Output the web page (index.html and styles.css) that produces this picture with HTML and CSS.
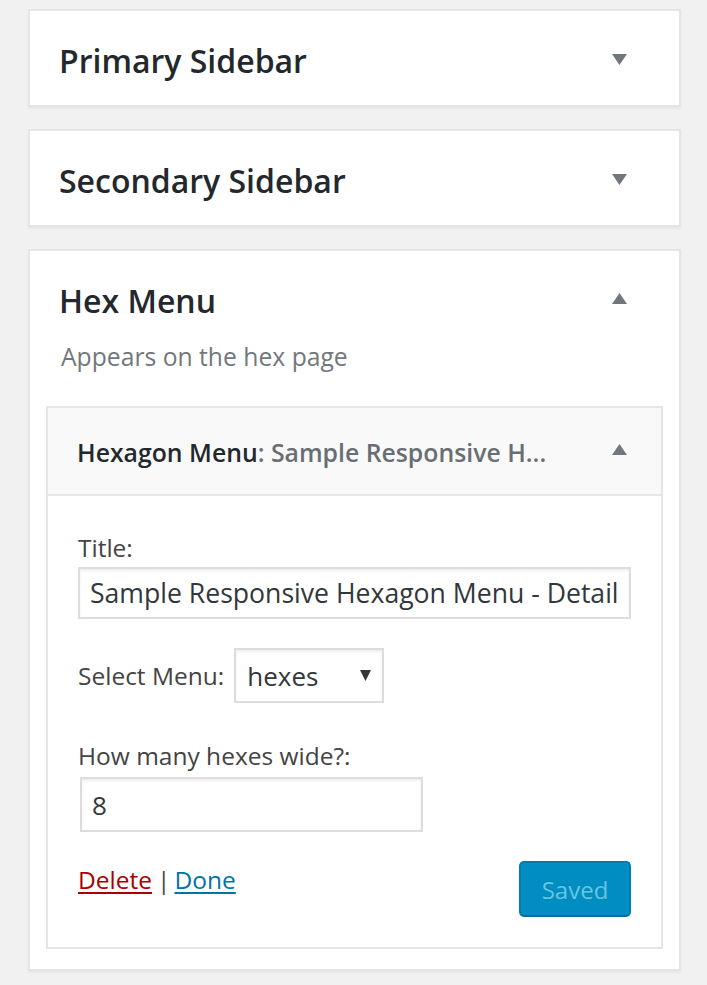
FILE: index.html
```html
<!DOCTYPE html>
<html lang="en">
<head>
<meta charset="utf-8">
<title>Widgets</title>
<link rel="stylesheet" href="styles.css">
</head>
<body>
<div class="wrap">
  <section class="card">
    <div class="card-head">
      <h2 class="card-title">Primary Sidebar</h2>
      <svg class="toggle toggle-down" width="15" height="11" viewBox="0 0 15 11" aria-hidden="true"><path d="M0 0H15L7.5 11Z"/></svg>
    </div>
  </section>

  <section class="card">
    <div class="card-head">
      <h2 class="card-title">Secondary Sidebar</h2>
      <svg class="toggle toggle-down" width="15" height="11" viewBox="0 0 15 11" aria-hidden="true"><path d="M0 0H15L7.5 11Z"/></svg>
    </div>
  </section>

  <section class="card card-open">
    <div class="card-head">
      <h2 class="card-title">Hex Menu</h2>
      <svg class="toggle toggle-up" width="15" height="11" viewBox="0 0 15 11" aria-hidden="true"><path d="M0 11H15L7.5 0Z"/></svg>
    </div>
    <p class="card-desc">Appears on the hex page</p>

    <div class="widget">
      <div class="widget-top">
        <h3 class="widget-title">Hexagon Menu<span class="in-title">: Sample Responsive H...</span></h3>
        <svg class="toggle widget-toggle" width="15" height="11" viewBox="0 0 15 11" aria-hidden="true"><path d="M0 11H15L7.5 0Z"/></svg>
      </div>
      <div class="widget-body">
        <label class="field-label" for="w-title">Title:</label>
        <input id="w-title" class="text-input text-wide" type="text" value="Sample Responsive Hexagon Menu - Details">

        <div class="select-row">
          <label class="inline-label" for="w-menu">Select Menu:</label>
          <div class="select-wrap">
            <select id="w-menu" class="menu-select"><option>hexes</option></select>
            <svg class="select-arrow" width="11" height="11" viewBox="0 0 11 11" aria-hidden="true"><path d="M0 0H11L5.5 11Z"/></svg>
          </div>
        </div>

        <label class="field-label field-label-spaced" for="w-count">How many hexes wide?:</label>
        <input id="w-count" class="text-input text-num" type="text" value="8">

        <div class="widget-foot">
          <div class="widget-links"><a class="link-delete" href="#">Delete</a><span class="sep">|</span><a class="link-done" href="#">Done</a></div>
          <button class="btn-saved" type="button" disabled>Saved</button>
        </div>
      </div>
    </div>
  </section>
</div>
</body>
</html>
```

FILE: styles.css
```css
* { box-sizing: border-box; }

html, body {
  margin: 0;
  background: #f1f1f1;
}

body {
  font-family: "Open Sans", "Noto Sans", sans-serif;
  color: #444;
}

.wrap {
  width: 707px;
  padding: 9px 26px 0 28px;
}

.card {
  background: #fff;
  border: 2px solid #e5e5e5;
  box-shadow: 0 2px 2px rgba(0, 0, 0, 0.04);
  padding: 28px 16px 22px;
  margin-bottom: 22px;
}

.card-open {
  padding-bottom: 20px;
}

.card-head {
  display: flex;
  justify-content: space-between;
  align-items: flex-start;
  padding: 0 36px 0 13px;
}

.card-title {
  margin: 0;
  font-size: 32px;
  line-height: 44px;
  font-weight: 600;
  color: #23282d;
}

.toggle {
  display: block;
  flex: none;
  fill: #72777c;
}

.toggle-down { margin-top: 15px; }
.toggle-up { margin-top: 14px; }

.card-desc {
  margin: 17px 0 0;
  padding-left: 15px;
  font-size: 24.7px;
  line-height: 34px;
  color: #72777c;
}

.widget {
  margin-top: 32px;
  border: 2px solid #e5e5e5;
  background: #fff;
}

.widget-top {
  display: flex;
  justify-content: space-between;
  align-items: flex-start;
  background: #f9f9f9;
  border-bottom: 2px solid #e5e5e5;
  height: 88px;
  padding: 27px 34px 0 29px;
}

.widget-title {
  margin: 0;
  font-size: 24.8px;
  line-height: 34px;
  font-weight: 600;
  color: #23282d;
  white-space: nowrap;
}

.in-title {
  color: #686e74;
}

.widget-toggle { margin-top: 9px; }

.widget-body {
  padding: 35px 30px 30px;
}

.field-label {
  display: block;
  font-size: 24.5px;
  line-height: 34px;
  color: #444;
}

.field-label-spaced {
  margin-top: 36px;
}

.text-input {
  display: block;
  font-family: inherit;
  font-size: 26.6px;
  color: #32373c;
  background: #fff;
  border: 2px solid #ddd;
  box-shadow: inset 0 2px 3px rgba(0, 0, 0, 0.07);
  border-radius: 0;
  outline: none;
  padding: 0 10px;
}

.text-wide {
  width: 100%;
  height: 52px;
  margin-top: 2px;
}

.text-num {
  width: 343px;
  height: 55px;
  margin: 4px 0 0 2px;
  font-size: 26px;
}

.select-row {
  display: flex;
  align-items: center;
  gap: 10px;
  margin-top: 29px;
}

.inline-label {
  font-size: 24.5px;
  line-height: 34px;
  color: #444;
}

.select-wrap {
  position: relative;
  width: 150px;
  height: 55px;
}

.menu-select {
  -webkit-appearance: none;
  appearance: none;
  display: block;
  width: 100%;
  height: 100%;
  font-family: inherit;
  font-size: 26px;
  color: #32373c;
  background: #fff;
  border: 2px solid #ddd;
  box-shadow: inset 0 2px 3px rgba(0, 0, 0, 0.07);
  border-radius: 0;
  padding: 0 30px 0 11px;
  outline: none;
}

.select-arrow {
  position: absolute;
  right: 13px;
  top: 22px;
  fill: #32373c;
  pointer-events: none;
}

.widget-foot {
  display: flex;
  justify-content: space-between;
  align-items: flex-start;
  margin-top: 29px;
}

.widget-links {
  margin-top: 2px;
  font-size: 24.5px;
  line-height: 34px;
  color: #444;
}

.widget-links a {
  text-decoration: underline;
  text-decoration-thickness: 2px;
  text-underline-offset: 3px;
}

.link-delete { color: #a00; }
.link-done { color: #0073aa; }

.sep {
  margin: 0 4px 0 5px;
}

.btn-saved {
  width: 112px;
  height: 56px;
  font-family: inherit;
  font-size: 24px;
  color: #66c6e4;
  background: #008ec2;
  border: 2px solid #007cb2;
  border-bottom-color: #006f9f;
  border-radius: 5px;
  padding: 0;
  text-shadow: 0 -1px 0 rgba(0, 0, 0, 0.1);
}
```
